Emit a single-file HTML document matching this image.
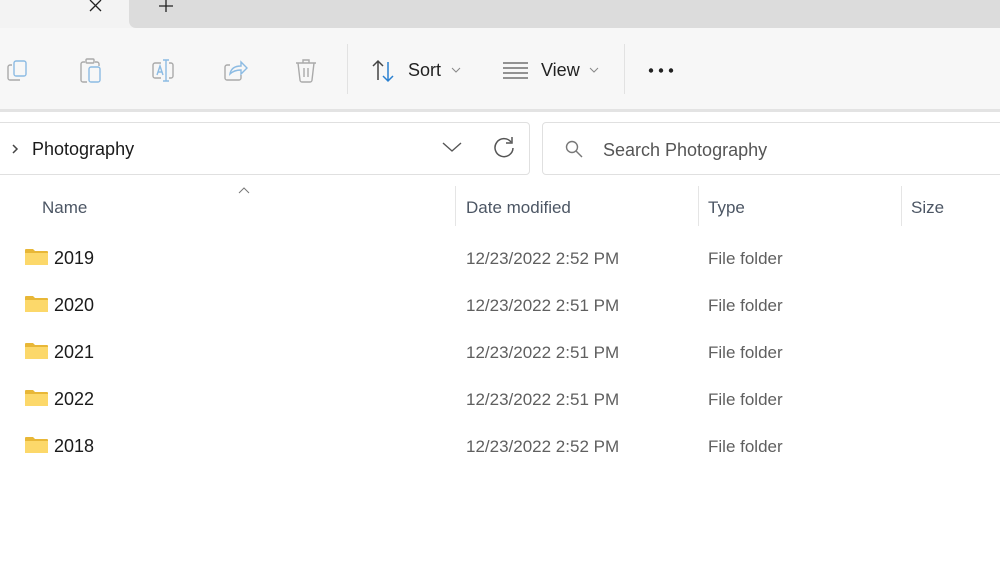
<!DOCTYPE html>
<html><head><style>
*{margin:0;padding:0;box-sizing:border-box}
body{width:1000px;height:563px;overflow:hidden;background:#fff;font-family:"Liberation Sans",sans-serif;position:relative}
.abs{position:absolute}
.t{font-size:18px;color:#1a1a1a}
.g{color:#5f5f5f;font-size:17px}
.h{color:#4c5664;font-size:17px}
</style></head><body>
<div class="abs" style="left:0;top:0;width:1000px;height:29px;background:#f3f3f3"></div>
<div class="abs" style="left:129px;top:0;width:871px;height:28px;background:#dcdcdc;border-bottom-left-radius:7px"></div>
<svg class="abs" style="left:88px;top:0" width="16" height="12"><path d="M2 0L13 11M13 0L2 11" stroke="#222" stroke-width="1.3"/></svg>
<svg class="abs" style="left:158px;top:0" width="16" height="12"><path d="M8 0V12M1 6H15" stroke="#222" stroke-width="1.3"/></svg>
<div class="abs" style="left:0;top:28px;width:1000px;height:82px;background:#f7f7f7"></div>
<div class="abs" style="left:0;top:109px;width:1000px;height:3px;background:#e3e3e3"></div>
<!-- toolbar icons -->
<svg class="abs" style="left:6px;top:58px" width="26" height="26" fill="none" stroke-width="1.4"><path d="M6 7H4a2 2 0 0 0-2 2v11a2 2 0 0 0 2 2h10" stroke="#aaa"/><rect x="8" y="3" width="12" height="15" rx="2" stroke="#8cbbe3"/></svg>
<svg class="abs" style="left:78px;top:56px" width="26" height="28" fill="none" stroke-width="1.4"><path d="M7 6H5a2 2 0 0 0-2 2v16a2 2 0 0 0 2 2h4M17 6h2a2 2 0 0 1 2 2v2" stroke="#aaa"/><rect x="8" y="3" width="8" height="4" rx="1" stroke="#aaa"/><rect x="11" y="11" width="11" height="15" rx="2" stroke="#8cbbe3"/></svg>
<svg class="abs" style="left:150px;top:57px" width="28" height="28" fill="none" stroke-width="1.4"><path d="M11 6H5a2 2 0 0 0-2 2v11a2 2 0 0 0 2 2h6M19 6h2a2 2 0 0 1 2 2v11a2 2 0 0 1-2 2h-2" stroke="#aaa"/><path d="M16 3v21M13 3h6M13 24h6M7 18l3-9 3 9M8 15h4" stroke="#8cbbe3"/></svg>
<svg class="abs" style="left:222px;top:57px" width="28" height="28" fill="none" stroke-width="1.4"><path d="M8 8H5a2 2 0 0 0-2 2v11a2 2 0 0 0 2 2h12a2 2 0 0 0 2-2v-3" stroke="#aaa"/><path d="M8 17c1-6 5-8 11-8V5l6 6-6 6v-4c-5 0-8 1-11 4z" stroke="#8cbbe3"/></svg>
<svg class="abs" style="left:294px;top:57px" width="26" height="28" fill="none" stroke="#aaa" stroke-width="1.4"><path d="M2 6H22M9 6V3h6v3M4 6l2 17a2 2 0 0 0 2 2h8a2 2 0 0 0 2-2l2-17M10 11v9M14 11v9"/></svg>
<div class="abs" style="left:347px;top:44px;width:1px;height:50px;background:#e2e2e2"></div>
<svg class="abs" style="left:371px;top:59px" width="26" height="24" fill="none" stroke-width="1.5"><path d="M7 21V2M2 7l5-5 5 5" stroke="#444"/><path d="M17 3v19M12 17l5 5 5-5" stroke="#2a80d0"/></svg>
<div class="abs t" style="left:408px;top:60px;color:#222">Sort</div>
<svg class="abs" style="left:451px;top:67px" width="10" height="6"><path d="M1 1l4 4 4-4" stroke="#888" fill="none"/></svg>
<svg class="abs" style="left:503px;top:61px" width="26" height="18"><path d="M0 2H25M0 7H25M0 12H25M0 17H25" stroke="#555" stroke-width="1.2"/></svg>
<div class="abs t" style="left:541px;top:60px;color:#222">View</div>
<svg class="abs" style="left:589px;top:67px" width="10" height="6"><path d="M1 1l4 4 4-4" stroke="#888" fill="none"/></svg>
<div class="abs" style="left:624px;top:44px;width:1px;height:50px;background:#e2e2e2"></div>
<svg class="abs" style="left:648px;top:67px" width="28" height="7"><circle cx="3" cy="3.5" r="2.2" fill="#222"/><circle cx="13" cy="3.5" r="2.2" fill="#222"/><circle cx="23" cy="3.5" r="2.2" fill="#222"/></svg>
<!-- address -->
<div class="abs" style="left:-5px;top:122px;width:535px;height:53px;border:1px solid #e0e0e0;border-radius:4px"></div>
<svg class="abs" style="left:11px;top:143px" width="8" height="12"><path d="M2 2l4 4-4 4" stroke="#444" stroke-width="1.5" fill="none"/></svg>
<div class="abs t" style="left:32px;top:139px">Photography</div>
<svg class="abs" style="left:442px;top:141px" width="20" height="12"><path d="M1 2l9 8 9-8" stroke="#555" stroke-width="1.4" fill="none"/></svg>
<svg class="abs" style="left:492px;top:136px" width="24" height="24" fill="none" stroke="#555" stroke-width="1.5"><path d="M19 6a9 9 0 1 0 2 6"/><path d="M20 1v6h-6"/></svg>
<div class="abs" style="left:542px;top:122px;width:470px;height:53px;border:1px solid #e0e0e0;border-radius:4px"></div>
<svg class="abs" style="left:565px;top:140px" width="18" height="18" fill="none" stroke="#777" stroke-width="1.4"><circle cx="7" cy="7" r="5.5"/><path d="M11 11l6 6"/></svg>
<div class="abs g" style="left:603px;top:140px;font-size:18px;color:#555">Search Photography</div>
<!-- headers -->
<svg class="abs" style="left:238px;top:186px" width="12" height="8"><path d="M1 7l5-5 5 5" stroke="#777" fill="none"/></svg>
<div class="abs h" style="left:42px;top:198px">Name</div>
<div class="abs" style="left:455px;top:186px;width:1px;height:40px;background:#e5e5e5"></div>
<div class="abs h" style="left:466px;top:198px">Date modified</div>
<div class="abs" style="left:698px;top:186px;width:1px;height:40px;background:#e5e5e5"></div>
<div class="abs h" style="left:708px;top:198px">Type</div>
<div class="abs" style="left:901px;top:186px;width:1px;height:40px;background:#e5e5e5"></div>
<div class="abs h" style="left:911px;top:198px">Size</div>
<!-- rows -->
<div id="rows"></div>
<script></script>
<div class="abs" style="left:0;top:0">
</div>
<!-- row template repeated -->
<div>
<svg class="abs" style="left:25px;top:248px" width="23" height="18"><path d="M0 2a1 1 0 0 1 1-1h7l2 2h12a1 1 0 0 1 1 1v13H0z" fill="#e8b737"/><path d="M0 5h23v12H0z" fill="#fcd86a"/></svg>
<div class="abs t" style="left:54px;top:248px">2019</div><div class="abs g" style="left:466px;top:249px">12/23/2022 2:52 PM</div><div class="abs g" style="left:708px;top:249px">File folder</div>
<svg class="abs" style="left:25px;top:295px" width="23" height="18"><path d="M0 2a1 1 0 0 1 1-1h7l2 2h12a1 1 0 0 1 1 1v13H0z" fill="#e8b737"/><path d="M0 5h23v12H0z" fill="#fcd86a"/></svg>
<div class="abs t" style="left:54px;top:295px">2020</div><div class="abs g" style="left:466px;top:296px">12/23/2022 2:51 PM</div><div class="abs g" style="left:708px;top:296px">File folder</div>
<svg class="abs" style="left:25px;top:342px" width="23" height="18"><path d="M0 2a1 1 0 0 1 1-1h7l2 2h12a1 1 0 0 1 1 1v13H0z" fill="#e8b737"/><path d="M0 5h23v12H0z" fill="#fcd86a"/></svg>
<div class="abs t" style="left:54px;top:342px">2021</div><div class="abs g" style="left:466px;top:343px">12/23/2022 2:51 PM</div><div class="abs g" style="left:708px;top:343px">File folder</div>
<svg class="abs" style="left:25px;top:389px" width="23" height="18"><path d="M0 2a1 1 0 0 1 1-1h7l2 2h12a1 1 0 0 1 1 1v13H0z" fill="#e8b737"/><path d="M0 5h23v12H0z" fill="#fcd86a"/></svg>
<div class="abs t" style="left:54px;top:389px">2022</div><div class="abs g" style="left:466px;top:390px">12/23/2022 2:51 PM</div><div class="abs g" style="left:708px;top:390px">File folder</div>
<svg class="abs" style="left:25px;top:436px" width="23" height="18"><path d="M0 2a1 1 0 0 1 1-1h7l2 2h12a1 1 0 0 1 1 1v13H0z" fill="#e8b737"/><path d="M0 5h23v12H0z" fill="#fcd86a"/></svg>
<div class="abs t" style="left:54px;top:436px">2018</div><div class="abs g" style="left:466px;top:437px">12/23/2022 2:52 PM</div><div class="abs g" style="left:708px;top:437px">File folder</div>
</div>
</body></html>
